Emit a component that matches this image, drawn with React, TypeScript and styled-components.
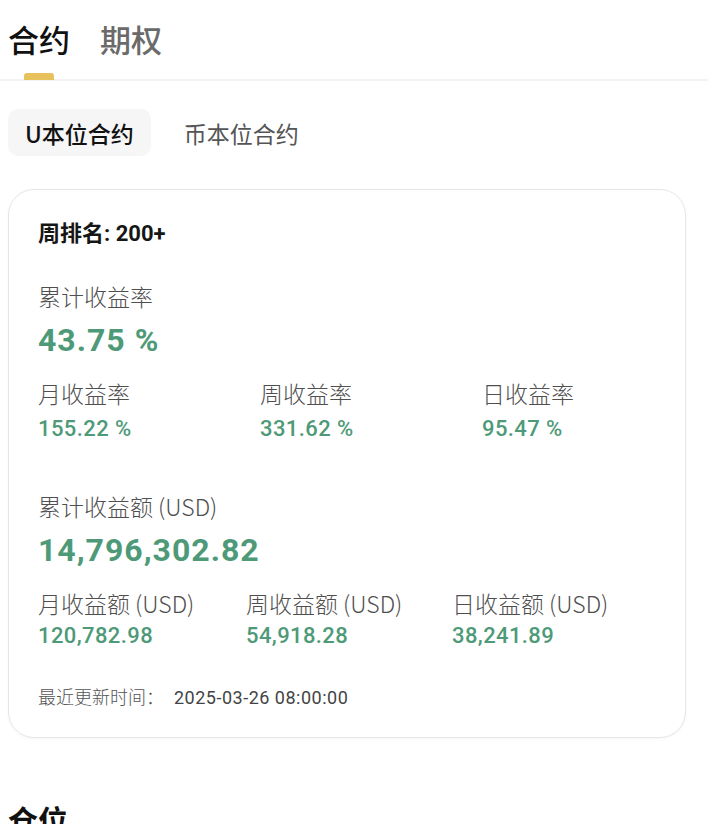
import { createGlobalStyle } from 'styled-components';
import styled from 'styled-components';

const GlobalStyle = createGlobalStyle`
  html, body {
    margin: 0;
    padding: 0;
    background: #ffffff;
  }
  body {
    font-family: Roboto, "Noto Sans CJK SC", sans-serif;
    color: #111;
    overflow: hidden;
  }
`;

type Stat = {
  label: string;
  value: string;
};

const rateStats: Stat[] = [
  { label: '月收益率', value: '155.22 %' },
  { label: '周收益率', value: '331.62 %' },
  { label: '日收益率', value: '95.47 %' },
];

const amountStats: Stat[] = [
  { label: '月收益额 (USD)', value: '120,782.98' },
  { label: '周收益额 (USD)', value: '54,918.28' },
  { label: '日收益额 (USD)', value: '38,241.89' },
];

const App = () => {
  return (
    <>
      <GlobalStyle />
      <StyledPage>
        <StyledTabBar>
          <StyledTab $active>
            合约
            <StyledIndicator />
          </StyledTab>
          <StyledTab>期权</StyledTab>
        </StyledTabBar>

        <StyledSegments>
          <StyledSegment $active>U本位合约</StyledSegment>
          <StyledSegment>币本位合约</StyledSegment>
        </StyledSegments>

        <StyledCard>
          <StyledRank>周排名: 200+</StyledRank>

          <StyledLabel $top={33}>累计收益率</StyledLabel>
          <StyledBigValue>43.75 %</StyledBigValue>

          <StyledStatGrid $columns="222px 222px 1fr" $top={18}>
            {rateStats.map((stat) => (
              <StyledStat key={stat.label}>
                <StyledLabel>{stat.label}</StyledLabel>
                <StyledValue>{stat.value}</StyledValue>
              </StyledStat>
            ))}
          </StyledStatGrid>

          <StyledLabel $top={47}>累计收益额 (USD)</StyledLabel>
          <StyledBigValue>14,796,302.82</StyledBigValue>

          <StyledStatGrid $columns="208px 206px 1fr" $top={18}>
            {amountStats.map((stat) => (
              <StyledStat key={stat.label}>
                <StyledLabel>{stat.label}</StyledLabel>
                <StyledValue $gap={3}>{stat.value}</StyledValue>
              </StyledStat>
            ))}
          </StyledStatGrid>

          <StyledUpdated>
            最近更新时间：<span>2025-03-26 08:00:00</span>
          </StyledUpdated>
        </StyledCard>

        <StyledSectionTitle>仓位</StyledSectionTitle>
      </StyledPage>
    </>
  );
};

export default App;

const StyledPage = styled.div`
  width: 708px;
  height: 824px;
  overflow: hidden;
`;

const StyledTabBar = styled.div`
  display: flex;
  align-items: flex-start;
  gap: 30px;
  height: 81px;
  padding: 0 8px;
  border-bottom: 2px solid #f3f3f3;
  box-sizing: border-box;
`;

const StyledTab = styled.div<{ $active?: boolean }>`
  position: relative;
  height: 100%;
  padding-top: 18px;
  box-sizing: border-box;
  font-family: "Noto Sans CJK SC", sans-serif;
  font-size: 31px;
  line-height: 42px;
  font-weight: 500;
  color: ${({ $active }) => ($active ? '#111111' : '#6a6a6a')};
`;

const StyledIndicator = styled.span`
  position: absolute;
  left: 16px;
  bottom: -1px;
  width: 30px;
  height: 7px;
  border-radius: 3px 3px 0 0;
  background: #e6c15c;
`;

const StyledSegments = styled.div`
  display: flex;
  align-items: center;
  gap: 16px;
  margin: 28px 0 0 8px;
`;

const StyledSegment = styled.div<{ $active?: boolean }>`
  height: 47px;
  padding: 0 17px;
  border-radius: 10px;
  display: flex;
  align-items: center;
  font-family: "Noto Sans CJK SC", sans-serif;
  font-size: 23px;
  font-weight: ${({ $active }) => ($active ? 500 : 400)};
  color: ${({ $active }) => ($active ? '#111111' : '#555555')};
  background: ${({ $active }) => ($active ? '#f6f6f6' : 'transparent')};
`;

const StyledCard = styled.div`
  margin: 33px 22px 0 8px;
  padding: 30px 30px 27px 29px;
  border: 1px solid #e6e6e6;
  border-radius: 26px;
  box-shadow: 0 1px 3px rgba(0, 0, 0, 0.04);
`;

const StyledRank = styled.div`
  font-family: Roboto, "Noto Sans CJK SC", sans-serif;
  font-size: 22px;
  line-height: 28px;
  font-weight: 700;
  color: #161616;
`;

const StyledLabel = styled.div<{ $top?: number }>`
  margin-top: ${({ $top }) => $top ?? 0}px;
  font-family: "Noto Sans CJK SC", sans-serif;
  font-size: 23px;
  line-height: 30px;
  font-weight: 300;
  color: #4f4f4f;
  white-space: nowrap;
`;

const StyledBigValue = styled.div`
  margin-top: 9px;
  font-family: Roboto, sans-serif;
  font-size: 32px;
  line-height: 40px;
  font-weight: 700;
  letter-spacing: 1px;
  color: #4e9a78;
`;

const StyledStatGrid = styled.div<{ $columns: string; $top: number }>`
  display: grid;
  grid-template-columns: ${({ $columns }) => $columns};
  margin-top: ${({ $top }) => $top}px;
`;

const StyledStat = styled.div`
  display: flex;
  flex-direction: column;
`;

const StyledValue = styled.div<{ $gap?: number }>`
  margin-top: ${({ $gap }) => $gap ?? 6}px;
  font-family: Roboto, sans-serif;
  font-size: 22px;
  line-height: 30px;
  font-weight: 500;
  letter-spacing: 0.4px;
  color: #4e9a78;
`;

const StyledUpdated = styled.div`
  margin-top: 33px;
  font-family: "Noto Sans CJK SC", sans-serif;
  font-size: 18px;
  line-height: 24px;
  font-weight: 300;
  color: #555;

  span {
    margin-left: 10px;
    font-family: Roboto, sans-serif;
    font-weight: 400;
    letter-spacing: 0.5px;
    color: #444;
  }
`;

const StyledSectionTitle = styled.div`
  margin: 61px 0 0 8px;
  font-family: "Noto Sans CJK SC", sans-serif;
  font-size: 30px;
  line-height: 40px;
  font-weight: 700;
  color: #111;
`;
